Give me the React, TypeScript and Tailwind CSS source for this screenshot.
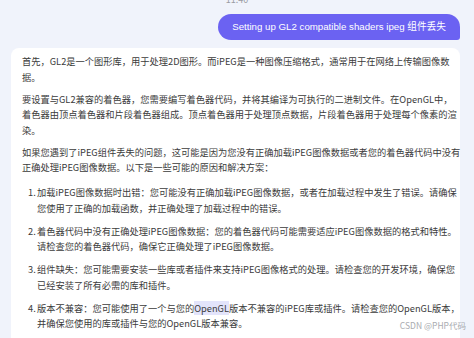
const paragraphs: string[][] = [
  [
    "首先，GL2是一个图形库，用于处理2D图形。而iPEG是一种图像压缩格式，通常用于在网络上传输图像数",
    "据。",
  ],
  [
    "要设置与GL2兼容的着色器，您需要编写着色器代码，并将其编译为可执行的二进制文件。在OpenGL中，",
    "着色器由顶点着色器和片段着色器组成。顶点着色器用于处理顶点数据，片段着色器用于处理每个像素的渲",
    "染。",
  ],
  [
    "如果您遇到了iPEG组件丢失的问题，这可能是因为您没有正确加载iPEG图像数据或者您的着色器代码中没有",
    "正确处理iPEG图像数据。以下是一些可能的原因和解决方案：",
  ],
];

const items: string[][] = [
  [
    "加载iPEG图像数据时出错：您可能没有正确加载iPEG图像数据，或者在加载过程中发生了错误。请确保",
    "您使用了正确的加载函数，并正确处理了加载过程中的错误。",
  ],
  [
    "着色器代码中没有正确处理iPEG图像数据：您的着色器代码可能需要适应iPEG图像数据的格式和特性。",
    "请检查您的着色器代码，确保它正确处理了iPEG图像数据。",
  ],
  [
    "组件缺失：您可能需要安装一些库或者插件来支持iPEG图像格式的处理。请检查您的开发环境，确保您",
    "已经安装了所有必需的库和插件。",
  ],
];

const App = () => {
  return (
    <div className="relative h-[338px] w-[474px] overflow-hidden bg-[#f0f3fb] font-['Noto_Sans_CJK_SC',sans-serif]">
      {/* timestamp, cut off at the top */}
      <div className="flex h-[14px] justify-center">
        <span className="-mt-[6px] text-[9px] leading-[12px] text-[#9a9ca3]">11:40</span>
      </div>

      <div className="flex justify-end pr-[14px]">
        <div className="flex h-[26px] items-center rounded-[13px] rounded-br-[3px] bg-[#6b62f2] px-[14px] font-['Liberation_Sans','Noto_Sans_CJK_SC',sans-serif] text-[9.7px] text-white">
          Setting up GL2 compatible shaders ipeg 组件丢失
        </div>
      </div>

      <section className="mx-[11px] mt-[8px] h-[300px] w-[449px] rounded-[8px] bg-white px-[11px] pt-[6px] text-[9.25px] leading-[15.5px] whitespace-nowrap text-[#3b3b3b]">
        {paragraphs.map((lines, i) => (
          <p key={i} className="mb-[6.5px]">
            {lines.map((l, j) => (
              <span key={j} className="block">
                {l}
              </span>
            ))}
          </p>
        ))}

        <ol className="mt-[9.5px] flex flex-col gap-[7.5px]">
          {items.map((lines, i) => (
            <li key={i} className="flex">
              <span className="w-[15px] shrink-0 pl-[6px]">{i + 1}.</span>
              <div>
                {lines.map((l, j) => (
                  <span key={j} className="block">
                    {l}
                  </span>
                ))}
              </div>
            </li>
          ))}
          <li className="flex">
            <span className="w-[15px] shrink-0 pl-[6px]">4.</span>
            <div>
              <span className="block">
                版本不兼容：您可能使用了一个与您的
                <span className="bg-[#e3e4fb]">OpenGL</span>
                版本不兼容的iPEG库或插件。请检查您的OpenGL版本，
              </span>
              <span className="block">并确保您使用的库或插件与您的OpenGL版本兼容。</span>
            </div>
          </li>
        </ol>
      </section>

      <span className="absolute right-[8px] bottom-[8px] text-[8.5px] leading-[10px] text-[#a9abb0]">
        CSDN @PHP代码
      </span>
    </div>
  );
};

export default App;
